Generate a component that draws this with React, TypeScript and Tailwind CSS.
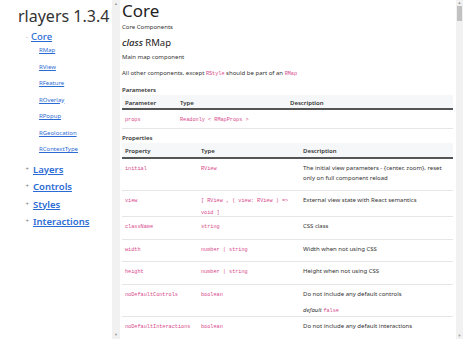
const sans = { fontFamily: '"Noto Sans", "Open Sans", sans-serif' };

function Code({ children }: { children: React.ReactNode }) {
  return (
    <span className="font-['Liberation_Mono','DejaVu_Sans_Mono',monospace] text-[5.2px] text-[#d6478a]">
      {children}
    </span>
  );
}

const subLinks = ['RMap', 'RView', 'RFeature', 'ROverlay', 'RPopup', 'RGeolocation', 'RContextType'];
const sections = ['Layers', 'Controls', 'Styles', 'Interactions'];

const props: { name: string; type: string[]; desc: React.ReactNode[]; h: string }[] = [
  {
    name: 'initial',
    type: ['RView'],
    desc: [
      <>
        <span className="block">The initial view parameters - {'{center, zoom}'}, reset</span>
        <span className="block">only on full component reload</span>
      </>,
    ],
    h: 'h-[32px]',
  },
  {
    name: 'view',
    type: ['[ RView , ( view: RView ) =>', 'void ]'],
    desc: ['External view state with React semantics'],
    h: 'h-[26px]',
  },
  { name: 'className', type: ['string'], desc: ['CSS class'], h: 'h-[23px]' },
  { name: 'width', type: ['number | string'], desc: ['Width when not using CSS'], h: 'h-[22px]' },
  { name: 'height', type: ['number | string'], desc: ['Height when not using CSS'], h: 'h-[23px]' },
  {
    name: 'noDefaultControls',
    type: ['boolean'],
    desc: [
      'Do not include any default controls',
      <>
        <i>default</i> <Code>false</Code>
      </>,
    ],
    h: 'h-[32px]',
  },
  {
    name: 'noDefaultInteractions',
    type: ['boolean'],
    desc: [
      'Do not include any default interactions',
      <>
        <i>default</i> <Code>false</Code>
      </>,
    ],
    h: 'h-[32px]',
  },
];

export default function App() {
  return (
    <div className="flex h-[339px] w-[474px] overflow-hidden bg-white text-[#333]" style={sans}>
      {/* Sidebar */}
      <aside className="w-[112px] shrink-0">
        <h1 className="mt-[6px] pl-[18px] text-[16px] leading-[20px] text-[#333] whitespace-nowrap">rlayers 1.3.4</h1>
        <div className="mt-[5px] flex items-center leading-[12px]">
          <span className="w-[31px] pr-[3px] text-right text-[6px] text-[#888]">-</span>
          <a className="text-[9.5px] font-medium text-[#2b6cd4] underline">Core</a>
        </div>
        <ul className="-mt-[1px] pl-[39px]">
          {subLinks.map((l) => (
            <li key={l} className="text-[6px] leading-[16.5px] text-[#2b6cd4] underline">
              {l}
            </li>
          ))}
        </ul>
        <ul className="mt-[3px]">
          {sections.map((s) => (
            <li key={s} className="flex items-center leading-[17.5px]">
              <span className="w-[33px] pr-[4px] text-right text-[6px] text-[#777]">+</span>
              <a className="text-[9.5px] font-semibold text-[#2b6cd4] underline">{s}</a>
            </li>
          ))}
        </ul>
      </aside>

      {/* Sidebar scrollbar */}
      <div className="flex w-[8px] shrink-0 flex-col items-center justify-between bg-[#f1f1f1] py-[1px] text-[4px] text-[#999]">
        <span>▲</span>
        <span>▼</span>
      </div>

      {/* Main */}
      <main className="min-w-0 flex-1 pl-[2px] pr-[3px]">
        <h2 className="text-[17px] leading-[22px] text-[#222]">Core</h2>
        <p className="text-[6px] leading-[10px]">Core Components</p>
        <h3 className="mt-[4px] text-[9.5px] leading-[14px] text-[#222]">
          <i className="font-medium">class</i> RMap
        </h3>
        <p className="mt-[2px] text-[6px] leading-[10px]">Main map component</p>
        <p className="mt-[6px] text-[6px] leading-[10px] whitespace-nowrap">
          All other components, except <Code>RStyle</Code> should be part of an <Code>RMap</Code>
        </p>
        <p className="mt-[6px] text-[6px] font-semibold leading-[10px]">Parameters</p>

        <div className="text-[6px]">
          <div className="flex h-[15px] border-b-2 border-[#555] bg-[#f6f7f9] pt-[2px] font-semibold leading-[13px]">
            <div className="w-[55px] pl-[3px]">Parameter</div>
            <div className="w-[110px] pl-[3px]">Type</div>
            <div className="flex-1 pl-[3px]">Description</div>
          </div>
          <div className="flex h-[19px] border-b border-[#e6e6e6] pt-[4px] leading-[10px]">
            <div className="w-[55px] pl-[3px]">
              <Code>props</Code>
            </div>
            <div className="w-[110px] pl-[3px]">
              <Code>Readonly {'<'} RMapProps {'>'}</Code>
            </div>
            <div className="flex-1 pl-[3px]" />
          </div>
        </div>

        <p className="mt-[4px] text-[6px] font-semibold leading-[10px]">Properties</p>

        <div className="text-[6px]">
          <div className="flex h-[16px] border-b-2 border-[#555] bg-[#f6f7f9] pt-[2px] font-semibold leading-[12px]">
            <div className="w-[76px] pl-[3px]">Property</div>
            <div className="w-[102px] pl-[3px]">Type</div>
            <div className="flex-1 pl-[3px]">Description</div>
          </div>
          {props.map((p) => (
            <div key={p.name} className={`flex ${p.h} border-b border-[#e6e6e6] pt-[4px] leading-[10px]`}>
              <div className="w-[76px] pl-[3px]">
                <Code>{p.name}</Code>
              </div>
              <div className="w-[102px] pl-[3px] leading-[11px]">
                {p.type.map((t) => (
                  <div key={t} className="whitespace-nowrap">
                    <Code>{t}</Code>
                  </div>
                ))}
              </div>
              <div className="flex flex-1 flex-col gap-[6px] pl-[3px] whitespace-nowrap">
                {p.desc.map((d, i) => (
                  <div key={i}>{d}</div>
                ))}
              </div>
            </div>
          ))}
        </div>
      </main>

      {/* Main scrollbar */}
      <div className="flex w-[7px] shrink-0 flex-col items-center bg-[#f1f1f1] py-[1px] text-[4px] text-[#999]">
        <span className="leading-[4px]">▲</span>
        <div className="mt-[1px] h-[15px] w-[5px] bg-[#c1c1c1]" />
        <div className="flex-1" />
        <span className="leading-[4px]">▼</span>
      </div>
      <div className="w-[11px] shrink-0" />
    </div>
  );
}
